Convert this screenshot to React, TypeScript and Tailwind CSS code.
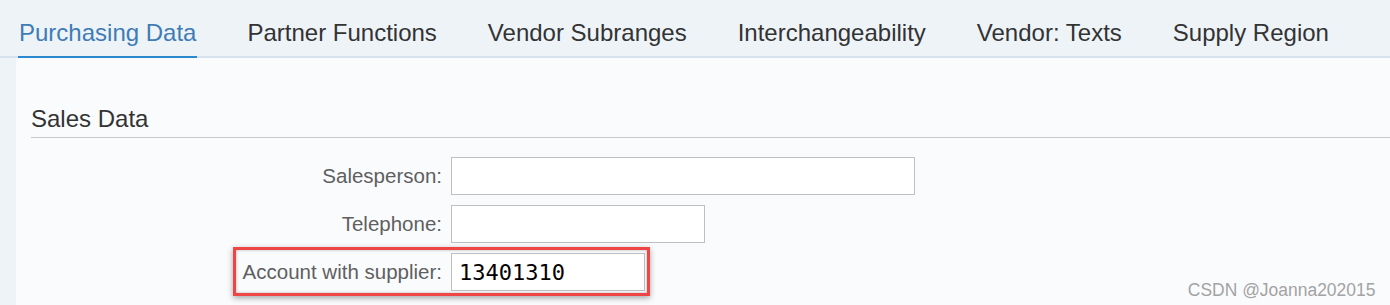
const TABS = [
  "Purchasing Data",
  "Partner Functions",
  "Vendor Subranges",
  "Interchangeability",
  "Vendor: Texts",
  "Supply Region",
];

const FIELDS = [
  { label: "Salesperson:", width: "w-[464px]", value: "" },
  { label: "Telephone:", width: "w-[254px]", value: "" },
  { label: "Account with supplier:", width: "w-[194px]", value: "13401310" },
];

export default function App() {
  return (
    <div
      className="relative flex h-[305px] w-[1390px] flex-col overflow-hidden bg-[#eef3f8]"
      style={{ fontFamily: '"Liberation Sans", Arial, sans-serif' }}
    >
      {/* tab strip */}
      <div className="flex gap-[49px] border-b-2 border-[#d6e3ef] pl-[18px] pt-[19px]">
        {TABS.map((tab, i) => (
          <div
            key={tab}
            className={
              i === 0
                ? "-mb-[2px] border-b-2 border-[#2b89cf] px-[1px] pb-[9px] text-[24px] leading-[28px] text-[#3f7cb5]"
                : "-mb-[2px] border-b-2 border-transparent px-[1px] pb-[9px] text-[24px] leading-[28px] text-[#333]"
            }
          >
            {tab}
          </div>
        ))}
      </div>

      {/* content panel */}
      <div className="ml-[16px] flex-1 bg-[#fafbfd] pl-[15px] pt-[47px]">
        <h3 className="border-b border-[#c8c8c8] pb-[4px] text-[24px] leading-[28px] text-[#333]">
          Sales Data
        </h3>

        <div className="relative mt-[19px] grid grid-cols-[411px_auto] gap-x-[9px] gap-y-[10px]">
          {FIELDS.map((f) => (
            <div key={f.label} className="contents">
              <label className="self-center text-right text-[20.5px] leading-[24px] text-[#5f5f5f]">
                {f.label}
              </label>
              <input
                readOnly
                defaultValue={f.value}
                className={`${f.width} h-[38px] border border-[#bfbfbf] bg-white pl-[7px] text-[22px] text-black outline-none`}
                style={{ fontFamily: '"DejaVu Sans Mono", monospace' }}
              />
            </div>
          ))}

          {/* red highlight around the account row */}
          <div className="pointer-events-none absolute left-[202px] top-[90px] h-[49px] w-[417px] border-[3px] border-[#ef4545] shadow-[0_2px_6px_rgba(0,0,0,0.35),inset_0_0_3px_rgba(0,0,0,0.3)]" />
        </div>
      </div>

      {/* watermark */}
      <div className="absolute bottom-[6px] right-[15px] origin-right scale-x-[0.97] text-[18px] leading-none text-[#a3a3a3]">
        CSDN @Joanna202015
      </div>
    </div>
  );
}
